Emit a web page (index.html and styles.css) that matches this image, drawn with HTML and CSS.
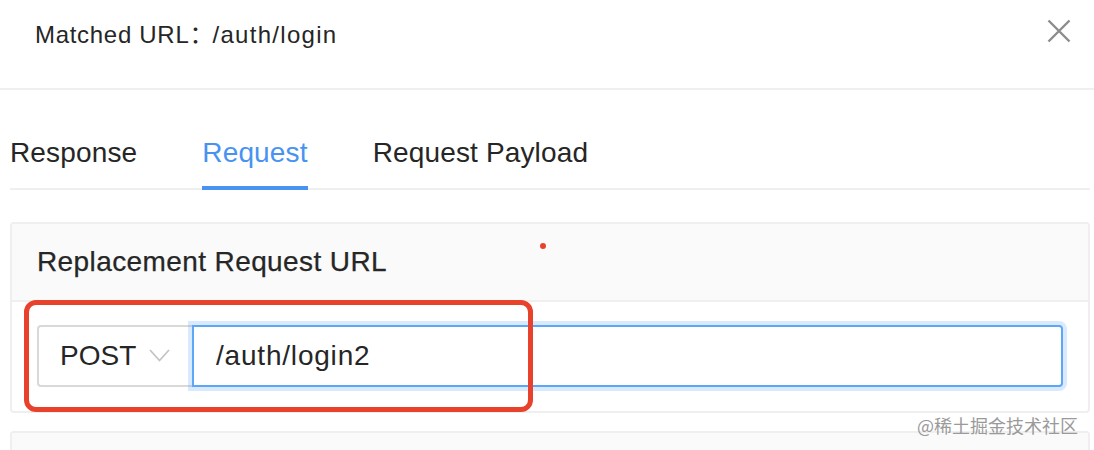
FILE: index.html
```html
<!DOCTYPE html>
<html lang="en">
<head>
<meta charset="utf-8">
<title>Matched URL</title>
<link rel="stylesheet" href="styles.css">
</head>
<body>
<div class="page">
  <header class="header">
    <div class="title">Matched URL<span class="colon">：</span><span class="path">/auth/login</span></div>
    <svg class="close" width="24" height="24" viewBox="0 0 24 24" aria-hidden="true">
      <path d="M1.5 1.5 L22.5 22.5 M22.5 1.5 L1.5 22.5" stroke="#8c8c8c" stroke-width="2.4" fill="none"/>
    </svg>
  </header>

  <nav class="tabs">
    <div class="tab">Response</div>
    <div class="tab active">Request</div>
    <div class="tab">Request Payload</div>
  </nav>

  <section class="card">
    <div class="card-head">Replacement Request URL</div>
    <div class="card-body">
      <div class="url-row">
        <div class="select">
          <span>POST</span>
          <svg class="chev" width="21" height="13" viewBox="0 0 21 13" aria-hidden="true">
            <path d="M1 1 L10.5 11.5 L20 1" stroke="#c4c4c4" stroke-width="1.8" fill="none"/>
          </svg>
        </div>
        <div class="input">/auth/login2</div>
      </div>
    </div>
  </section>

  <section class="card card-next">
    <div class="card-head"></div>
  </section>

  <div class="annot-box"></div>
  <div class="annot-dot"></div>
  <div class="watermark">@稀土掘金技术社区</div>
</div>
</body>
</html>
```

FILE: styles.css
```css
html, body {
  margin: 0;
  padding: 0;
  background: #ffffff;
}

body {
  font-family: "Liberation Sans", Arial, "Noto Sans CJK SC", sans-serif;
  color: #262626;
  overflow: hidden;
}

.page {
  position: relative;
  width: 1094px;
  height: 450px;
  overflow: hidden;
}

.header {
  display: flex;
  justify-content: space-between;
  align-items: flex-start;
  height: 88px;
  padding: 0 23px 0 35px;
  border-bottom: 2px solid #efefef;
  box-sizing: content-box;
}

.title {
  margin-top: 19px;
  font-size: 24px;
  line-height: 28px;
  letter-spacing: 0.7px;
  color: #262626;
}

.colon {
  font-family: "Noto Sans CJK SC", sans-serif;
  letter-spacing: 0;
  margin-right: -1px;
}

.path {
  letter-spacing: 1.3px;
}

.close {
  margin-top: 19px;
  display: block;
}

.tabs {
  display: flex;
  gap: 65px;
  margin: 0 4px 0 10px;
  border-bottom: 2px solid #efefef;
}

.tab {
  font-size: 28px;
  line-height: 32px;
  padding: 47px 0 17px;
  border-bottom: 4px solid transparent;
  margin-bottom: -2px;
  color: #262626;
  letter-spacing: 0.15px;
}

.tab.active {
  color: #4893f1;
  border-bottom-color: #4893f1;
}

.card {
  margin: 32px 4px 0 10px;
  border: 2px solid #efefef;
  border-radius: 4px;
  background: #ffffff;
}

.card-head {
  background: #fafafa;
  font-size: 28px;
  line-height: 32px;
  padding: 22px 25px;
  border-bottom: 2px solid #efefef;
  color: #262626;
  -webkit-text-stroke: 0.25px #262626;
  letter-spacing: 0.4px;
}

.card-body {
  padding: 23px 25px 24px;
}

.url-row {
  display: flex;
  height: 62px;
}

.select {
  display: flex;
  align-items: center;
  justify-content: space-between;
  width: 155px;
  box-sizing: border-box;
  padding: 0 22px 0 21px;
  border: 2px solid #d9d9d9;
  border-right: none;
  border-radius: 4px 0 0 4px;
  background: #ffffff;
  font-size: 28px;
  line-height: 32px;
}

.chev {
  display: block;
  margin-top: -1px;
}

.input {
  position: relative;
  z-index: 1;
  flex: 1;
  box-sizing: border-box;
  border: 2px solid #5ea6f7;
  border-radius: 0 4px 4px 0;
  box-shadow: 0 0 0 4px rgba(64, 150, 255, 0.2);
  padding: 0 20px 0 22px;
  font-size: 28px;
  line-height: 58px;
  letter-spacing: 0.8px;
  background: #ffffff;
}

.card-next {
  margin-top: 18px;
  height: 80px;
}

.card-next .card-head {
  height: 80px;
  padding: 0;
  border-bottom: none;
}

.annot-box {
  position: absolute;
  left: 24px;
  top: 300px;
  width: 509px;
  height: 112px;
  box-sizing: border-box;
  border: 5px solid #e8412c;
  border-radius: 12px;
  z-index: 5;
}

.annot-dot {
  position: absolute;
  left: 540px;
  top: 243px;
  width: 6px;
  height: 6px;
  border-radius: 50%;
  background: #e8412c;
}

.watermark {
  position: absolute;
  right: 16px;
  top: 413px;
  font-family: "Noto Sans CJK SC", "Liberation Sans", sans-serif;
  font-size: 18px;
  line-height: 24px;
  color: #9a9a9a;
  z-index: 6;
}
```
